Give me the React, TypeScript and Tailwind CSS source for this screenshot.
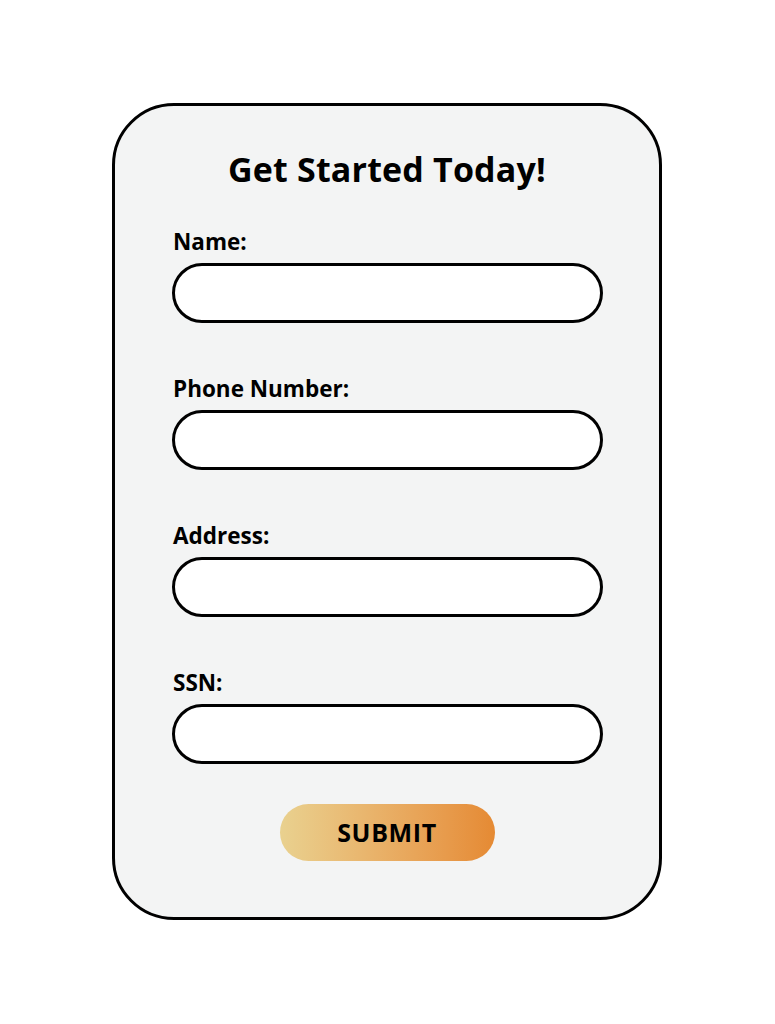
export default function App() {
  const fields = ["Name:", "Phone Number:", "Address:", "SSN:"];
  return (
    <div className="min-h-[1024px] w-[775px] bg-white pt-[103px] pl-[112px]" style={{ fontFamily: "'Open Sans', 'Noto Sans', sans-serif" }}>
      <div className="w-[550px] h-[817px] rounded-[62px] border-[3px] border-black bg-[#f3f4f4] px-[57px] pt-[42px]">
        <h1 className="text-center text-[34px] leading-[42px] font-bold text-black tracking-[0.005em]">Get Started Today!</h1>
        <div className="mt-[38px] flex flex-col gap-[52px]">
          {fields.map((f) => (
            <div key={f} className="flex flex-col">
              <label className="pl-[1px] text-[22.5px] leading-[28px] font-bold text-black">{f}</label>
              <div className="mt-[7px] h-[60px] w-[431px] rounded-full border-[3px] border-black bg-white" />
            </div>
          ))}
        </div>
        <div className="mt-[40px] flex justify-center">
          <button className="h-[57px] w-[215px] rounded-full bg-gradient-to-r from-[#e9d18f] to-[#e58a33] text-[25px] tracking-[0.025em] font-bold text-black">SUBMIT</button>
        </div>
      </div>
    </div>
  );
}
